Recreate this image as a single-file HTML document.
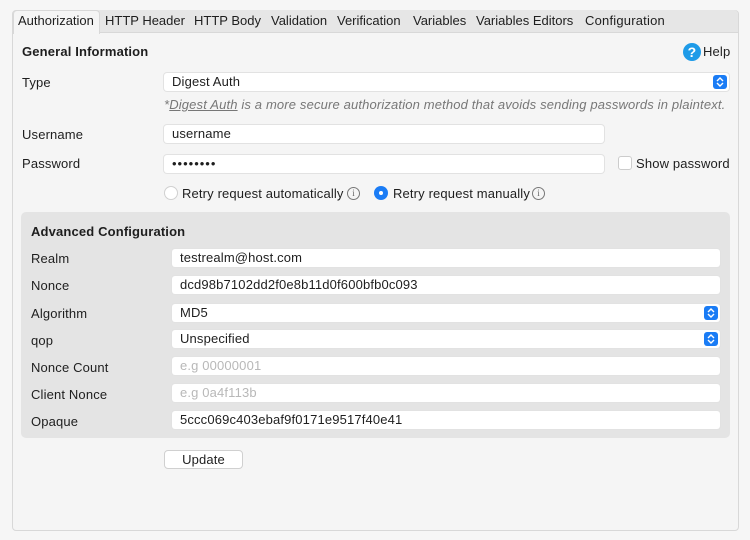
<!DOCTYPE html>
<html><head><meta charset="utf-8"><style>
*{box-sizing:border-box;margin:0;padding:0}
body{width:750px;height:540px;background:#f6f6f6;font-family:"Liberation Sans",sans-serif;font-size:13px;letter-spacing:0.15px;color:#1e1e1e;position:relative;overflow:hidden}
.a{position:absolute;white-space:nowrap}
.panel{position:absolute;left:12px;top:10px;width:727px;height:521px;background:#f5f5f5;border:1px solid #d8d8d8;border-radius:4px}
.tabs{position:absolute;left:13px;top:10px;width:725px;height:23px;background:#e6e6e6;border-bottom:1px solid #d8d8d8;border-radius:4px 4px 0 0}
.tab{position:absolute;top:13px;font-size:13px;letter-spacing:0}
.act{position:absolute;left:13px;top:10px;width:87px;height:24px;background:#f5f5f5;border:1px solid #d8d8d8;border-bottom:none;border-radius:4px 4px 0 0}
.in{position:absolute;background:#fff;border-radius:3px;box-shadow:0 0 0 1px #e2e2e2;padding-left:8px;line-height:18px;height:18px}
.ph{color:#b8b8b8}
.sel{position:absolute;right:2px;top:2px;width:14px;height:14px;background:#1a7cf5;border-radius:3px}
.b{font-weight:bold}
.adv{position:absolute;left:21px;top:212px;width:709px;height:226px;background:#e4e4e4;border-radius:5px}
.info{position:absolute;width:13px;height:13px;border:1px solid #777;border-radius:50%;font-size:9px;line-height:11px;text-align:center;color:#666;font-family:"Liberation Serif",serif;letter-spacing:0}
</style></head><body>
<div class="panel"></div>
<div class="tabs"></div>
<div class="act"></div>
<div class="a tab" style="left:18px">Authorization</div>
<div class="a tab" style="left:105px">HTTP Header</div>
<div class="a tab" style="left:194px">HTTP Body</div>
<div class="a tab" style="left:271px">Validation</div>
<div class="a tab" style="left:337px">Verification</div>
<div class="a tab" style="left:413px">Variables</div>
<div class="a tab" style="left:476px">Variables Editors</div>
<div class="a tab" style="left:585px;letter-spacing:0.2px">Configuration</div>

<div class="a b" style="left:22px;top:44px">General Information</div>
<div class="a" style="left:683px;top:43px;width:18px;height:18px;border-radius:50%;background:#1e9be8;color:#fff;font-weight:bold;text-align:center;line-height:18px;font-size:14px">?</div>
<div class="a" style="left:703px;top:44px">Help</div>

<div class="a" style="left:22px;top:75px">Type</div>
<div class="in" style="left:164px;top:73px;width:565px">Digest Auth<svg class="sel" viewBox="0 0 14 14"><path d="M4 6l3-3 3 3M4 8l3 3 3-3" stroke="#fff" stroke-width="1.4" fill="none"/></svg></div>
<div class="a" style="left:164px;top:97px;font-style:italic;color:#777">*<span style="text-decoration:underline">Digest Auth</span> is a more secure authorization method that avoids sending passwords in plaintext.</div>

<div class="a" style="left:22px;top:127px">Username</div>
<div class="in" style="left:164px;top:125px;width:440px">username</div>
<div class="a" style="left:22px;top:156px">Password</div>
<div class="in" style="left:164px;top:155px;width:440px;letter-spacing:1px">••••••••</div>
<div class="a" style="left:618px;top:156px;width:14px;height:14px;background:#fff;border:1px solid #ccc;border-radius:3px"></div>
<div class="a" style="left:636px;top:156px">Show password</div>

<div class="a" style="left:164px;top:186px;width:14px;height:14px;background:#fff;border:1px solid #d0d0d0;border-radius:50%"></div>
<div class="a" style="left:182px;top:186px">Retry request automatically</div>
<div class="info" style="left:347px;top:187px">i</div>
<div class="a" style="left:374px;top:186px;width:14px;height:14px;background:#1a7cf5;border-radius:50%"><div style="position:absolute;left:5px;top:5px;width:4px;height:4px;background:#fff;border-radius:50%"></div></div>
<div class="a" style="left:393px;top:186px">Retry request manually</div>
<div class="info" style="left:532px;top:187px">i</div>

<div class="adv"></div>
<div class="a b" style="left:31px;top:224px">Advanced Configuration</div>
<div class="a" style="left:31px;top:251px">Realm</div>
<div class="in" style="left:172px;top:249px;width:548px">testrealm@host.com</div>
<div class="a" style="left:31px;top:278px">Nonce</div>
<div class="in" style="left:172px;top:276px;width:548px">dcd98b7102dd2f0e8b11d0f600bfb0c093</div>
<div class="a" style="left:31px;top:306px">Algorithm</div>
<div class="in" style="left:172px;top:304px;width:548px">MD5<svg class="sel" viewBox="0 0 14 14"><path d="M4 6l3-3 3 3M4 8l3 3 3-3" stroke="#fff" stroke-width="1.4" fill="none"/></svg></div>
<div class="a" style="left:31px;top:333px">qop</div>
<div class="in" style="left:172px;top:330px;width:548px">Unspecified<svg class="sel" viewBox="0 0 14 14"><path d="M4 6l3-3 3 3M4 8l3 3 3-3" stroke="#fff" stroke-width="1.4" fill="none"/></svg></div>
<div class="a" style="left:31px;top:360px">Nonce Count</div>
<div class="in ph" style="left:172px;top:357px;width:548px">e.g 00000001</div>
<div class="a" style="left:31px;top:387px">Client Nonce</div>
<div class="in ph" style="left:172px;top:384px;width:548px">e.g 0a4f113b</div>
<div class="a" style="left:31px;top:414px">Opaque</div>
<div class="in" style="left:172px;top:411px;width:548px">5ccc069c403ebaf9f0171e9517f40e41</div>

<div class="a" style="left:164px;top:450px;width:79px;height:19px;background:#fff;border:1px solid #d0d0d0;border-radius:4px;text-align:center;line-height:17px">Update</div>
</body></html>
